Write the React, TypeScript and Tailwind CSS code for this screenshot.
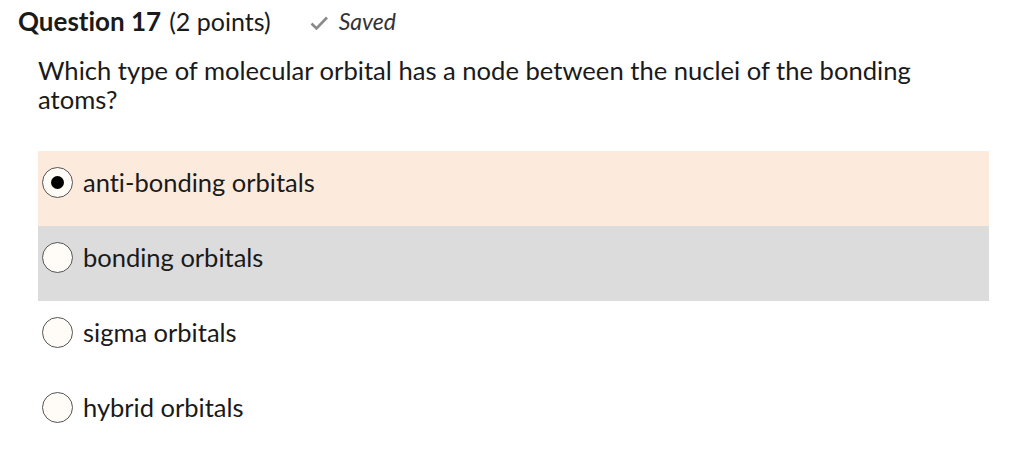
const options = [
  { label: "anti-bonding orbitals", selected: true, bg: "bg-[#fcebdd]" },
  { label: "bonding orbitals", selected: false, bg: "bg-[#dcdcdc]" },
  { label: "sigma orbitals", selected: false, bg: "" },
  { label: "hybrid orbitals", selected: false, bg: "" },
];

export default function App() {
  return (
    <div className="h-[456px] w-[1024px] bg-white text-[#1a1a1a] font-['Lato','Liberation_Sans',sans-serif] [font-variant-ligatures:none]">
      <div className="flex items-center pl-[18px] pt-[5px] h-[38px]">
        <h2 className="text-[26px] font-bold">Question 17</h2>
        <span className="ml-[8px] text-[25px]">(2 points)</span>
        <span className="ml-[38px] flex items-center gap-[10px] text-[23px] italic text-[#333]">
          <svg width="20" height="16" viewBox="0 0 20 16" className="mt-[2px]">
            <path d="M2.5 8.5 L7.5 13.5 L18 2.5" fill="none" stroke="#8a8a8a" strokeWidth="2.6" />
          </svg>
          Saved
        </span>
      </div>

      <p className="mx-[38px] mt-[18px] w-[920px] text-[25.6px] leading-[29px]">
        Which type of molecular orbital has a node between the nuclei of the bonding atoms?
      </p>

      <div className="mt-[37px] mx-[38px] w-[951px]">
        {options.map((o) => (
          <div key={o.label} className={`flex h-[75px] items-center pl-[4px] pb-[12px] ${o.bg}`}>
            <span className="flex h-[31px] w-[31px] items-center justify-center rounded-full border border-[#555] bg-[#fffbf7]">
              {o.selected && <span className="h-[13px] w-[13px] rounded-full bg-black" />}
            </span>
            <span className="ml-[10px] text-[25.5px]">{o.label}</span>
          </div>
        ))}
      </div>
    </div>
  );
}
